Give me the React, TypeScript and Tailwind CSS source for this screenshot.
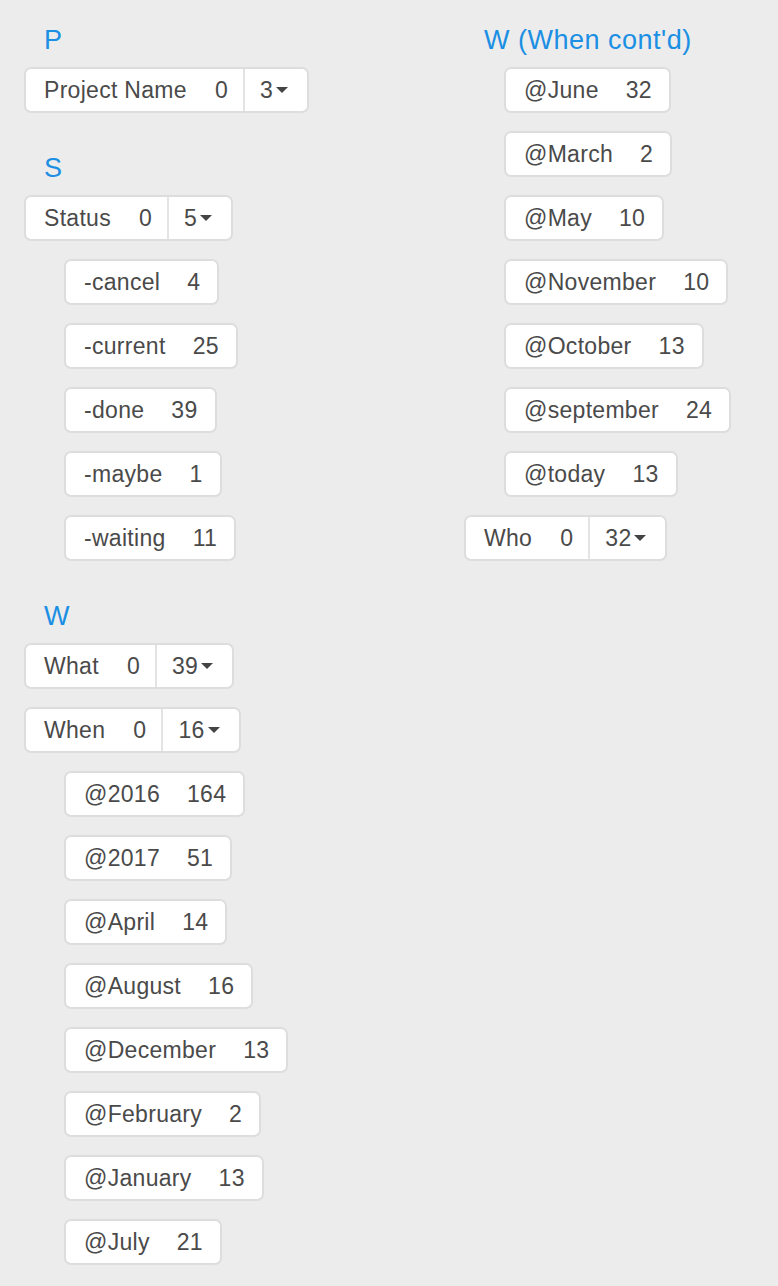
type Tag = { label: string; count: number };

type Group = {
  label: string;
  count: number;
  total: number;
  tags?: Tag[];
};

const Caret = () => (
  <span className="ml-[3px] inline-block h-0 w-0 border-x-[6px] border-t-[6px] border-x-transparent border-t-[#444444] align-middle" />
);

function GroupButton({ label, count, total }: Group) {
  return (
    <div className="flex h-[46px] w-fit items-stretch rounded-[7px] border-2 border-[#dddddd] bg-white text-[#4a4a4a]">
      <div className="flex items-center gap-[28px] pl-[18px] pr-[15px]">
        <span>{label}</span>
        <span>{count}</span>
      </div>
      <div className="w-[2px] bg-[#e4e4e4]" />
      <div className="flex items-center pl-[15px] pr-[19px]">
        <span>{total}</span>
        <Caret />
      </div>
    </div>
  );
}

function TagButton({ label, count }: Tag) {
  return (
    <div className="flex h-[46px] w-fit items-center gap-[27px] rounded-[7px] border-2 border-[#dddddd] bg-white pl-[18px] pr-[17px] text-[#4a4a4a]">
      <span>{label}</span>
      <span>{count}</span>
    </div>
  );
}

function Heading({ children, first }: { children: React.ReactNode; first?: boolean }) {
  return (
    <h2
      className={`${first ? "" : "mt-[41px]"} mb-[13px] h-[28px] pl-[20px] text-[27px] leading-[28px] tracking-[0.5px] text-[#1b8fe3]`}
    >
      {children}
    </h2>
  );
}

function GroupBlock({ group }: { group: Group }) {
  return (
    <div className="flex flex-col gap-[18px]">
      <GroupButton {...group} />
      {group.tags && group.tags.length > 0 && (
        <div className="flex flex-col gap-[18px] pl-[40px]">
          {group.tags.map((t) => (
            <TagButton key={t.label} {...t} />
          ))}
        </div>
      )}
    </div>
  );
}

const status: Group = {
  label: "Status",
  count: 0,
  total: 5,
  tags: [
    { label: "-cancel", count: 4 },
    { label: "-current", count: 25 },
    { label: "-done", count: 39 },
    { label: "-maybe", count: 1 },
    { label: "-waiting", count: 11 },
  ],
};

const whenLeft: Tag[] = [
  { label: "@2016", count: 164 },
  { label: "@2017", count: 51 },
  { label: "@April", count: 14 },
  { label: "@August", count: 16 },
  { label: "@December", count: 13 },
  { label: "@February", count: 2 },
  { label: "@January", count: 13 },
  { label: "@July", count: 21 },
];

const whenRight: Tag[] = [
  { label: "@June", count: 32 },
  { label: "@March", count: 2 },
  { label: "@May", count: 10 },
  { label: "@November", count: 10 },
  { label: "@October", count: 13 },
  { label: "@september", count: 24 },
  { label: "@today", count: 13 },
];

export default function App() {
  return (
    <div
      className="flex min-h-[1286px] w-full bg-[#ececec] pl-[24px] pt-[26px] text-[23px] tracking-[0.3px]"
      style={{ fontFamily: '"Liberation Sans", Arial, sans-serif' }}
    >
      {/* Left column */}
      <div className="flex w-[440px] flex-col">
        <Heading first>P</Heading>
        <GroupBlock group={{ label: "Project Name", count: 0, total: 3 }} />

        <Heading>S</Heading>
        <GroupBlock group={status} />

        <Heading>W</Heading>
        <div className="flex flex-col gap-[18px]">
          <GroupBlock group={{ label: "What", count: 0, total: 39 }} />
          <GroupBlock group={{ label: "When", count: 0, total: 16, tags: whenLeft }} />
        </div>
      </div>

      {/* Right column */}
      <div className="flex flex-col">
        <Heading first>W (When cont'd)</Heading>
        <div className="flex flex-col gap-[18px]">
          <div className="flex flex-col gap-[18px] pl-[40px]">
            {whenRight.map((t) => (
              <TagButton key={t.label} {...t} />
            ))}
          </div>
          <GroupBlock group={{ label: "Who", count: 0, total: 32 }} />
        </div>
      </div>
    </div>
  );
}
